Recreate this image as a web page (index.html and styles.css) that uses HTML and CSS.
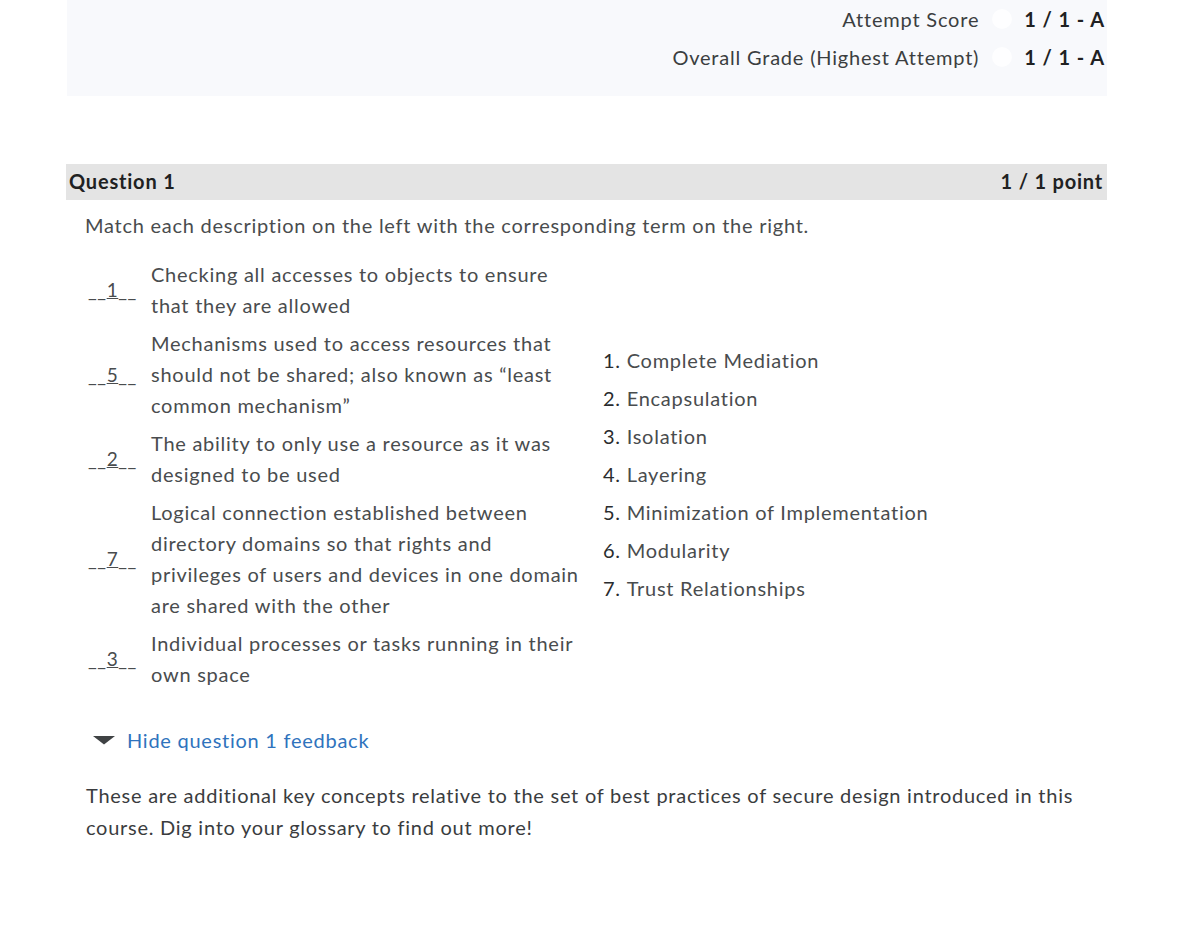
FILE: index.html
```html
<!DOCTYPE html>
<html>
<head>
<meta charset="utf-8">
<link rel="stylesheet" href="styles.css">
</head>
<body>
<div class="page">
  <div class="summary">
    <div class="sum-grid">
      <span class="sum-label">Attempt Score</span><span class="dot"></span><span class="sum-value">1 / 1 - A</span>
      <span class="sum-label">Overall Grade (Highest Attempt)</span><span class="dot"></span><span class="sum-value">1 / 1 - A</span>
    </div>
  </div>

  <div class="q-head">
    <span class="q-title">Question 1</span>
    <span class="q-points">1 / 1 point</span>
  </div>

  <div class="q-body">
    <p class="prompt">Match each description on the left with the corresponding term on the right.</p>

    <div class="match">
      <div class="items">
        <div class="item"><span class="blank">__<u>1</u>__</span><span class="desc">Checking all accesses to objects to ensure that they are allowed</span></div>
        <div class="item"><span class="blank">__<u>5</u>__</span><span class="desc">Mechanisms used to access resources that should not be shared; also known as “least common mechanism”</span></div>
        <div class="item"><span class="blank">__<u>2</u>__</span><span class="desc">The ability to only use a resource as it was designed to be used</span></div>
        <div class="item"><span class="blank">__<u>7</u>__</span><span class="desc">Logical connection established between directory domains so that rights and privileges of users and devices in one domain are shared with the other</span></div>
        <div class="item"><span class="blank">__<u>3</u>__</span><span class="desc">Individual processes or tasks running in their own space</span></div>
      </div>
      <ol class="terms">
        <li>Complete Mediation</li>
        <li>Encapsulation</li>
        <li>Isolation</li>
        <li>Layering</li>
        <li>Minimization of Implementation</li>
        <li>Modularity</li>
        <li>Trust Relationships</li>
      </ol>
    </div>

    <div class="toggle">
      <svg class="caret" width="24" height="10" viewBox="0 0 24 10"><polygon points="1,1 23,1 12,9.5" fill="#3f4244"/></svg>
      <span class="toggle-link">Hide question 1 feedback</span>
    </div>

    <p class="feedback">These are additional key concepts relative to the set of best practices of secure design introduced in this course. Dig into your glossary to find out more!</p>
  </div>
</div>
</body>
</html>
```

FILE: styles.css
```css
html, body {
  margin: 0;
  padding: 0;
  background: #ffffff;
}
body {
  font-family: Lato, "Open Sans", sans-serif;
  color: #494c4e;
  font-size: 20px;
  letter-spacing: 0.74px;
}
.page {
  width: 1041px;
  margin-left: 66px;
}
.summary {
  margin-left: 1px;
  background: #f8f9fc;
  height: 96px;
  box-sizing: border-box;
  padding: 0 2px 0 0;
  display: flex;
  justify-content: flex-end;
}
.sum-grid {
  display: grid;
  grid-template-columns: auto 45px auto;
  grid-auto-rows: 38px;
  align-items: center;
}
.sum-label {
  text-align: right;
  color: #3b3e40;
  letter-spacing: 0.8px;
}
.dot {
  width: 20px;
  height: 20px;
  border-radius: 50%;
  background: #ffffff;
  opacity: 0.8;
  justify-self: center;
}
.sum-value {
  font-weight: 700;
  color: #202122;
  letter-spacing: 0.9px;
}
.q-head {
  margin-top: 68px;
  height: 36px;
  background: #e4e4e4;
  display: flex;
  align-items: center;
  justify-content: space-between;
  padding: 0 4px 0 3px;
  font-weight: 700;
  color: #202122;
  letter-spacing: 0.8px;
}
.q-title, .q-points {
  position: relative;
  top: -1px;
}
.q-body {
  padding-left: 19px;
}
.prompt {
  margin: 10px 0 0 0;
  line-height: 31px;
}
.match {
  margin-top: 14px;
  display: flex;
  align-items: center;
}
.items {
  display: flex;
  flex-direction: column;
}
.item {
  display: flex;
  align-items: center;
  padding: 3.5px 0;
}
.blank {
  width: 66px;
  padding-left: 3px;
  box-sizing: border-box;
  font-size: 19px;
  letter-spacing: 0.6px;
  color: #494c4e;
}
.desc {
  width: 436px;
  line-height: 31px;
}
.terms {
  margin: 0 0 0 16px;
  padding: 0;
  list-style-position: inside;
  line-height: 38px;
}
.terms li::marker {
  color: #2a2c2e;
}
.toggle {
  margin-top: 31px;
  display: flex;
  align-items: center;
  gap: 11px;
  padding-left: 7px;
  height: 31px;
}
.caret {
  display: block;
}
.toggle-link {
  color: #2f73bd;
}
.feedback {
  margin: 24px 0 0 1px;
  line-height: 32px;
  color: #3a3c3e;
  width: 1000px;
}
```
